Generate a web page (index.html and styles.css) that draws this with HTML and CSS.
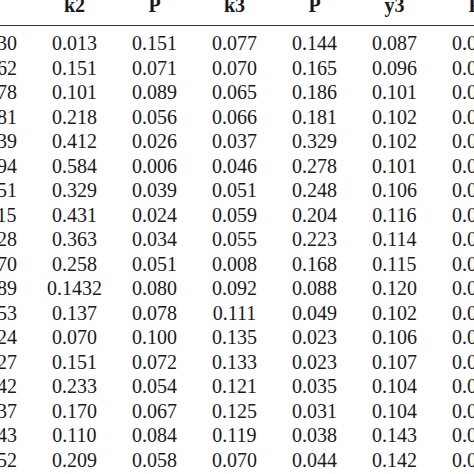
FILE: index.html
```html
<!DOCTYPE html>
<html>
<head>
<meta charset="utf-8">
<link rel="stylesheet" href="styles.css">
</head>
<body>
<div class="table">
  <div class="head">
    <span></span><span>k2</span><span>P</span><span>k3</span><span>P</span><span>y3</span><span>P</span>
  </div>
  <div class="body">
    <div class="row"><span>0.130</span><span>0.013</span><span>0.151</span><span>0.077</span><span>0.144</span><span>0.087</span><span>0.045</span></div>
    <div class="row"><span>0.162</span><span>0.151</span><span>0.071</span><span>0.070</span><span>0.165</span><span>0.096</span><span>0.052</span></div>
    <div class="row"><span>0.178</span><span>0.101</span><span>0.089</span><span>0.065</span><span>0.186</span><span>0.101</span><span>0.048</span></div>
    <div class="row"><span>0.181</span><span>0.218</span><span>0.056</span><span>0.066</span><span>0.181</span><span>0.102</span><span>0.047</span></div>
    <div class="row"><span>0.139</span><span>0.412</span><span>0.026</span><span>0.037</span><span>0.329</span><span>0.102</span><span>0.047</span></div>
    <div class="row"><span>0.194</span><span>0.584</span><span>0.006</span><span>0.046</span><span>0.278</span><span>0.101</span><span>0.049</span></div>
    <div class="row"><span>0.151</span><span>0.329</span><span>0.039</span><span>0.051</span><span>0.248</span><span>0.106</span><span>0.044</span></div>
    <div class="row"><span>0.115</span><span>0.431</span><span>0.024</span><span>0.059</span><span>0.204</span><span>0.116</span><span>0.039</span></div>
    <div class="row"><span>0.128</span><span>0.363</span><span>0.034</span><span>0.055</span><span>0.223</span><span>0.114</span><span>0.040</span></div>
    <div class="row"><span>0.170</span><span>0.258</span><span>0.051</span><span>0.008</span><span>0.168</span><span>0.115</span><span>0.041</span></div>
    <div class="row"><span>0.189</span><span>0.1432</span><span>0.080</span><span>0.092</span><span>0.088</span><span>0.120</span><span>0.036</span></div>
    <div class="row"><span>0.153</span><span>0.137</span><span>0.078</span><span>0.111</span><span>0.049</span><span>0.102</span><span>0.046</span></div>
    <div class="row"><span>0.124</span><span>0.070</span><span>0.100</span><span>0.135</span><span>0.023</span><span>0.106</span><span>0.043</span></div>
    <div class="row"><span>0.127</span><span>0.151</span><span>0.072</span><span>0.133</span><span>0.023</span><span>0.107</span><span>0.042</span></div>
    <div class="row"><span>0.142</span><span>0.233</span><span>0.054</span><span>0.121</span><span>0.035</span><span>0.104</span><span>0.044</span></div>
    <div class="row"><span>0.137</span><span>0.170</span><span>0.067</span><span>0.125</span><span>0.031</span><span>0.104</span><span>0.044</span></div>
    <div class="row"><span>0.143</span><span>0.110</span><span>0.084</span><span>0.119</span><span>0.038</span><span>0.143</span><span>0.031</span></div>
    <div class="row"><span>0.152</span><span>0.209</span><span>0.058</span><span>0.070</span><span>0.044</span><span>0.142</span><span>0.032</span></div>
  </div>
</div>
</body>
</html>
```

FILE: styles.css
```css
html, body {
  margin: 0;
  padding: 0;
  background: #ffffff;
  overflow: hidden;
  width: 474px;
  height: 474px;
}

.table {
  margin: -7px 0 0 -45.5px;
  width: 560px;
  font-family: "Liberation Serif", "Times New Roman", serif;
  font-size: 20px;
  color: #1a1a1a;
}

.head,
.row {
  display: grid;
  grid-template-columns: repeat(7, 80px);
  text-align: center;
  white-space: nowrap;
}

.head {
  font-weight: bold;
  line-height: 24px;
  padding-bottom: 8px;
  border-bottom: 1px solid #333333;
}

.body {
  padding-top: 5px;
}

.row {
  line-height: 24.5px;
}
```
